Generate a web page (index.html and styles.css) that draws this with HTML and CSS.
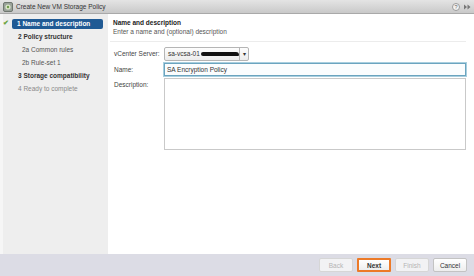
FILE: index.html
```html
<!DOCTYPE html>
<html>

<head>
  <meta name="viewport" content="width=device-width, initial-scale=1">
  <title>Create New VM Storage Policy</title>
  <link rel="stylesheet" href="styles.css">
</head>

<body>
  <div class="dialog">
    <div class="titlebar">
      <svg class="title-icon" width="10" height="10" viewBox="0 0 10 10">
        <rect x="0.5" y="0.5" width="9" height="9" rx="1.5" fill="#9aa29a" stroke="#6f776f"/>
        <circle cx="5" cy="5" r="2.6" fill="#d9e6c8"/>
        <circle cx="5" cy="5" r="1.2" fill="#6f9a4a"/>
      </svg>
      <span class="title-text">Create New VM Storage Policy</span>
      <span class="title-tools">
        <svg width="8" height="8" viewBox="0 0 8 8">
          <circle cx="4" cy="4" r="3.5" fill="#f4f4f4" stroke="#9a9a9a"/>
          <text x="4" y="6" font-size="5.5" text-anchor="middle" fill="#666" font-family="Liberation Sans">?</text>
        </svg>
        <svg width="8" height="8" viewBox="0 0 8 8">
          <path d="M1 1.5 L4 4 L1 6.5 Z M4.5 1.5 L7.5 4 L4.5 6.5 Z" fill="#777"/>
        </svg>
      </span>
    </div>

    <div class="main">
      <div class="steps">
        <div class="step done current">
          <span class="check">✔</span>
          <span class="step-label">1 Name and description</span>
        </div>
        <div class="step"><span class="step-label">2 Policy structure</span></div>
        <div class="step sub"><span class="step-label">2a Common rules</span></div>
        <div class="step sub"><span class="step-label">2b Rule-set 1</span></div>
        <div class="step"><span class="step-label">3 Storage compatibility</span></div>
        <div class="step disabled"><span class="step-label">4 Ready to complete</span></div>
      </div>

      <div class="content">
        <div class="header">
          <div class="header-title">Name and description</div>
          <div class="header-sub">Enter a name and (optional) description</div>
        </div>

        <div class="form">
          <div class="row">
            <label class="field-label">vCenter Server:</label>
            <div class="select">
              <span class="select-value">sa-vcsa-01<span class="redacted"></span></span>
              <span class="select-arrow">▾</span>
            </div>
          </div>
          <div class="row">
            <label class="field-label">Name:</label>
            <div class="input focused">SA Encryption Policy</div>
          </div>
          <div class="row">
            <label class="field-label">Description:</label>
            <div class="textarea"></div>
          </div>
        </div>
      </div>
    </div>

    <div class="footer">
      <button class="btn" disabled>Back</button>
      <button class="btn primary">Next</button>
      <button class="btn" disabled>Finish</button>
      <button class="btn">Cancel</button>
    </div>
  </div>
</body>

</html>
```

FILE: styles.css
```css
body {
  margin: 0;
  font-family: "Liberation Sans", Arial, sans-serif;
  font-size: 7px;
  color: #333;
  background-color: #fff;
}

.dialog {
  width: 474px;
  height: 276px;
  display: flex;
  flex-direction: column;
}

.titlebar {
  height: 13px;
  display: flex;
  align-items: center;
  padding: 0 3px;
  background: linear-gradient(#e4e4e4, #c9c9c9);
  border-bottom: 1px solid #a9a9a9;
}

.title-icon {
  margin-right: 3px;
}

.title-text {
  font-size: 6.5px;
  color: #333;
}

.title-tools {
  margin-left: auto;
  display: flex;
  gap: 3px;
  align-items: center;
}

.main {
  flex: 1;
  display: flex;
}

.steps {
  width: 105px;
  background-color: #eeeeee;
  border-left: 3px solid #f6f6f6;
  padding-top: 3px;
}

.step {
  position: relative;
  height: 13px;
  display: flex;
  align-items: center;
  padding-left: 15px;
  font-weight: bold;
  font-size: 6.5px;
  color: #333;
}

.step.sub {
  padding-left: 19px;
  font-weight: normal;
  color: #555;
}

.step.disabled {
  font-weight: normal;
  color: #8a8a8a;
}

.step.current .step-label {
  background-color: #205a94;
  color: #fff;
  border-radius: 2px;
  margin-left: -6px;
  padding: 1px 6px 1px 5px;
  width: 80px;
  line-height: 8px;
}

.check {
  position: absolute;
  left: 0;
  top: 2px;
  color: #6aa33c;
  font-size: 7px;
}

.content {
  flex: 1;
  padding: 0 8px 0 2px;
}

.header {
  padding: 4px 3px 5px;
  border-bottom: 1px solid #ececec;
}

.header-title {
  font-weight: bold;
  font-size: 6.5px;
  color: #222;
  line-height: 9px;
}

.header-sub {
  font-size: 6.5px;
  color: #555;
  line-height: 9px;
}

.form {
  padding-top: 5px;
}

.row {
  display: flex;
  margin-bottom: 2px;
}

.field-label {
  width: 50px;
  padding-left: 4px;
  padding-top: 3px;
  font-size: 6.5px;
  color: #444;
}

.select {
  width: 83px;
  height: 12px;
  display: flex;
  border: 1px solid #b5b5b5;
  border-radius: 2px;
  background: linear-gradient(#fdfdfd, #ececec);
}

.select-value {
  flex: 1;
  padding-left: 3px;
  line-height: 12px;
  font-size: 6.5px;
  color: #333;
  display: flex;
  align-items: center;
  white-space: nowrap;
  overflow: hidden;
}

.redacted {
  display: inline-block;
  width: 40px;
  height: 4px;
  margin-left: 1px;
  background-color: #111;
  border-radius: 2px 3px 1px 2px;
}

.select-arrow {
  width: 8px;
  border-left: 1px solid #b5b5b5;
  text-align: center;
  line-height: 12px;
  font-size: 6px;
  color: #333;
}

.input {
  flex: 1;
  height: 11px;
  line-height: 11px;
  padding-left: 2px;
  font-size: 6.5px;
  color: #333;
  border: 1px solid #c6c6c6;
  background-color: #fbfdfe;
}

.input.focused {
  border: 1px solid #6ba4bf;
  box-shadow: 0 0 0 1px #a9cfdf;
}

.textarea {
  flex: 1;
  height: 70px;
  border: 1px solid #c9c9c9;
  background-color: #fff;
}

.footer {
  height: 22px;
  display: flex;
  align-items: center;
  justify-content: flex-end;
  gap: 4px;
  padding-right: 7px;
  background-color: #dcdce5;
}

.btn {
  width: 34px;
  height: 14px;
  padding: 0;
  font-family: "Liberation Sans", Arial, sans-serif;
  font-size: 6.5px;
  color: #333;
  border: 1px solid #c3c3c3;
  border-radius: 2px;
  background: linear-gradient(#ffffff, #eeeeee);
}

.btn:disabled {
  color: #b4b4b4;
  border-color: #d6d6d6;
  background: #f2f2f4;
}

.btn.primary {
  font-weight: bold;
  border: 2px solid #ec7a28;
  border-radius: 1px;
}
```
